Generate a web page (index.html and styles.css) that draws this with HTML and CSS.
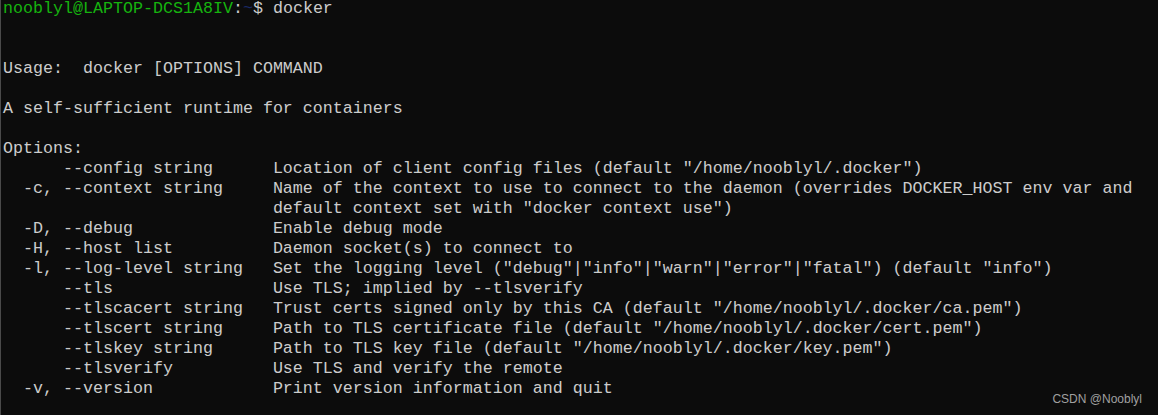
FILE: index.html
```html
<!DOCTYPE html>
<html>
<head>
<meta charset="utf-8">
<link rel="stylesheet" href="styles.css">
</head>
<body>
<div class="term">
<pre class="out"><span class="g">nooblyl@LAPTOP-DCS1A8IV</span>:<span class="b">~</span>$ docker


Usage:  docker [OPTIONS] COMMAND

A self-sufficient runtime for containers

Options:
      --config string      Location of client config files (default "/home/nooblyl/.docker")
  -c, --context string     Name of the context to use to connect to the daemon (overrides DOCKER_HOST env var and
                           default context set with "docker context use")
  -D, --debug              Enable debug mode
  -H, --host list          Daemon socket(s) to connect to
  -l, --log-level string   Set the logging level ("debug"|"info"|"warn"|"error"|"fatal") (default "info")
      --tls                Use TLS; implied by --tlsverify
      --tlscacert string   Trust certs signed only by this CA (default "/home/nooblyl/.docker/ca.pem")
      --tlscert string     Path to TLS certificate file (default "/home/nooblyl/.docker/cert.pem")
      --tlskey string      Path to TLS key file (default "/home/nooblyl/.docker/key.pem")
      --tlsverify          Use TLS and verify the remote
  -v, --version            Print version information and quit</pre>
<div class="mark">CSDN @Nooblyl</div>
</div>
</body>
</html>
```
FILE: styles.css
```css
html, body {
  margin: 0;
  padding: 0;
  background: #0c0c0c;
}
.term {
  position: relative;
  width: 1157px;
  height: 415px;
  overflow: hidden;
  background: #0c0c0c;
  border-left: 1px solid #4a4a4a;
}
.out {
  margin: -1px 0 0 2px;
  font-family: "Liberation Mono", monospace;
  font-size: 16.667px;
  line-height: 20px;
  color: #cccccc;
  white-space: pre;
}
.g { color: #16b30f; }
.b { color: #1b2a66; }
.mark {
  position: absolute;
  right: 16px;
  bottom: 9px;
  font-family: "Liberation Sans", Arial, sans-serif;
  font-size: 12px;
  color: #a0a0a0;
}
```
